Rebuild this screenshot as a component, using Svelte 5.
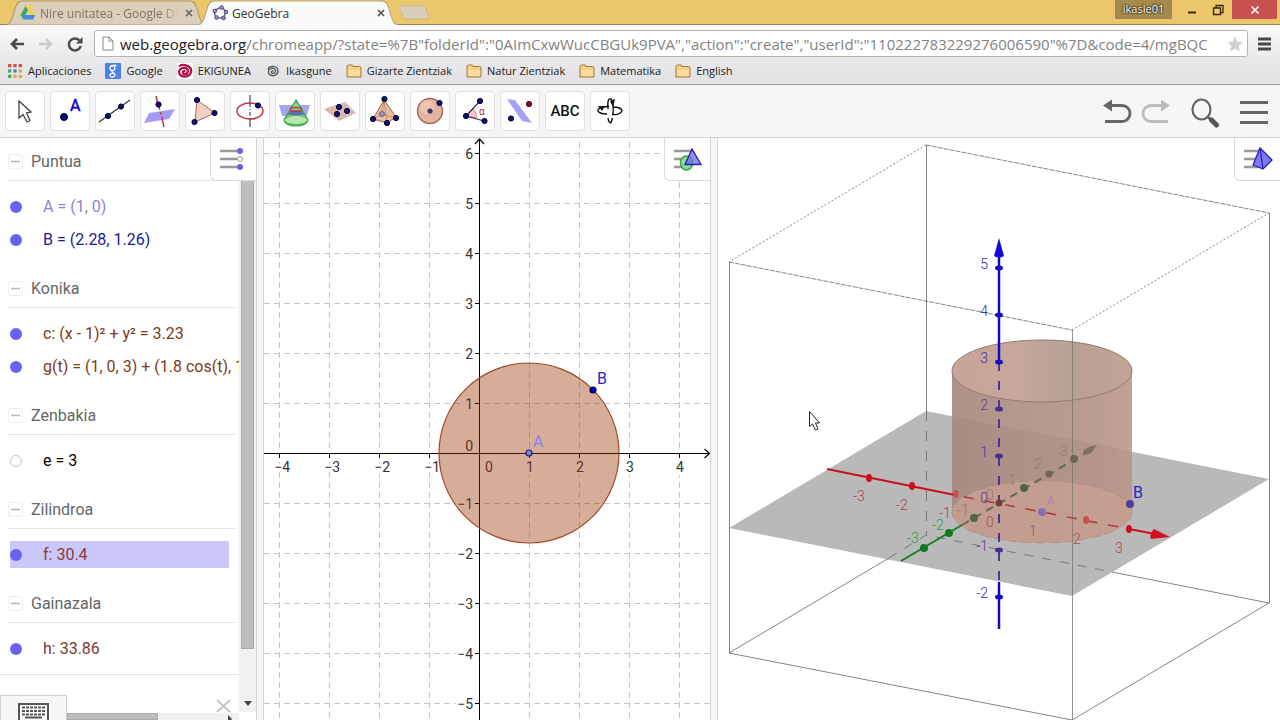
<script>
  const bookmarks = [
    { label: 'Aplicaciones', icon: 'apps' },
    { label: 'Google', icon: 'google' },
    { label: 'EKIGUNEA', icon: 'spiralRed' },
    { label: 'Ikasgune', icon: 'spiralGrey' },
    { label: 'Gizarte Zientziak', icon: 'folder' },
    { label: 'Natur Zientziak', icon: 'folder' },
    { label: 'Matematika', icon: 'folder' },
    { label: 'English', icon: 'folder' }
  ];

  const appColors = [
    ['#cf4b46', '#cf4b46', '#cf4b46'],
    ['#3fa35b', '#4579d0', '#e4a92f'],
    ['#3fa35b', '#e4a92f', '#e4a92f']
  ];

  const tools = [
    'Move', 'Point', 'Line', 'Perpendicular line', 'Polygon', 'Circle with axis', 'Intersect surfaces',
    'Plane', 'Pyramid', 'Sphere', 'Angle', 'Reflect', 'Text', 'Rotate view'
  ];

  const groups = [
    { name: 'Puntua', items: [
      { text: 'A = (1, 0)', color: '#8d7fd6', on: true },
      { text: 'B = (2.28, 1.26)', color: '#1a1a9c', on: true }
    ] },
    { name: 'Konika', items: [
      { text: 'c: (x - 1)² + y² = 3.23', color: '#7d3a1c', on: true },
      { text: 'g(t) = (1, 0, 3) + (1.8 cos(t), 1.8 sin(t), 0)', color: '#7d3a1c', on: true }
    ] },
    { name: 'Zenbakia', items: [{ text: 'e = 3', color: '#000', on: false }] },
    { name: 'Zilindroa', items: [{ text: 'f: 30.4', color: '#8a3a3a', on: true, selected: true }] },
    { name: 'Gainazala', items: [{ text: 'h: 33.86', color: '#7d3a2c', on: true }] }
  ];

  // 2D view: origin and unit length in drawing coordinates
  const ox = 479;
  const oy = 453;
  const unit = 50;
  const xs = [-4, -3, -2, -1, 1, 2, 3, 4];
  const ys = [6, 5, 4, 3, 2, 1, -1, -2, -3, -4, -5];
  const fmt = (n) => (n < 0 ? '−' + -n : '' + n);

  // 3D view: tick marks along the vertical axis
  const zTicks = [5, 4, 3, 2, 1, -1, -2].map((n) => ({ n, y: 503 - n * 47 }));
</script>

<div class="window">
  <header class="strip">
    <div class="tab first">
      <svg class="shape" viewBox="0 0 200 24" preserveAspectRatio="none" aria-hidden="true">
        <path d="M0 24C5 23 6 18 8 12C10 5 11 1 16 1H184C189 1 190 5 192 12C194 18 195 23 200 24Z" fill="#dccfb9" stroke="#ab9873" />
      </svg>
      <svg class="fav" viewBox="0 0 16 16" aria-hidden="true">
        <path d="M5.500 1h5l5 9h-5z" fill="#f5cf45" /><path d="M5.500 1L8 5.500 3 14.500 .5 10z" fill="#3ba56b" /><path d="M5.500 10h10L13 14.500H3z" fill="#4688e8" />
      </svg>
      <span class="title fade">Nire unitatea - Google Drive</span>
      <button class="close" aria-label="Close tab"><svg viewBox="0 0 8 8"><path d="M1 1l6 6M7 1L1 7" stroke="#666" stroke-width="1.700" /></svg></button>
    </div>
    <div class="tab active">
      <svg class="shape" viewBox="0 0 200 24" preserveAspectRatio="none" aria-hidden="true">
        <path d="M0 24C5 23 6 18 8 12C10 5 11 1 16 1H184C189 1 190 5 192 12C194 18 195 23 200 24" fill="#fafafa" stroke="#b7a47c" />
      </svg>
      <svg class="fav" viewBox="0 0 16 16" aria-hidden="true">
        <ellipse cx="8" cy="8" rx="5.500" ry="5" transform="rotate(-20 8 8)" fill="none" stroke="#5d5787" stroke-width="1.400" />
        <g fill="#9d98cc" stroke="#4a4470" stroke-width="1"><circle cx="2.800" cy="6" r="1.800" /><circle cx="9.500" cy="2.500" r="1.800" /><circle cx="14" cy="7" r="1.800" /><circle cx="11.500" cy="13" r="1.800" /><circle cx="4.500" cy="12.500" r="1.800" /></g>
      </svg>
      <span class="title">GeoGebra</span>
      <button class="close" aria-label="Close tab"><svg viewBox="0 0 8 8"><path d="M1 1l6 6M7 1L1 7" stroke="#555" stroke-width="1.700" /></svg></button>
    </div>
    <button class="newtab" aria-label="New tab"><svg viewBox="0 0 32 15"><path d="M1 2Q1 1 3 1H24Q27 1 28 4L31 12Q31 14 29 14H8Q6 14 5 12Z" fill="#d8cdb8" stroke="#c8b68c" /></svg></button>
    <span class="spacer"></span>
    <span class="user">ikasle01</span>
    <div class="controls">
      <button class="ctl" aria-label="Minimize"><svg viewBox="0 0 12 12"><path d="M2 8.500h8" stroke="#33260c" stroke-width="2" /></svg></button>
      <button class="ctl" aria-label="Restore"><svg viewBox="0 0 12 12"><path d="M1.500 4h7v6.500h-7zM4 3.500V1.500h7v7H9" fill="none" stroke="#33260c" stroke-width="1.300" /></svg></button>
      <button class="ctl quit" aria-label="Close"><svg viewBox="0 0 12 12"><path d="M2.500 2.500l7 7M9.500 2.500l-7 7" stroke="#fff" stroke-width="1.600" /></svg></button>
    </div>
  </header>

  <nav class="address">
    <button class="nav" aria-label="Back"><svg viewBox="0 0 16 16"><path d="M15 8H3M8 3L3 8l5 5" fill="none" stroke="#4a4a4a" stroke-width="2.600" /></svg></button>
    <button class="nav" aria-label="Forward"><svg viewBox="0 0 16 16"><path d="M1 8h12M8 3l5 5-5 5" fill="none" stroke="#c9c9c9" stroke-width="2.400" /></svg></button>
    <button class="nav" aria-label="Reload"><svg viewBox="0 0 16 16"><path d="M12.500 4.500A6 6 0 1 0 13.800 10" fill="none" stroke="#4a4a4a" stroke-width="2.500" /><path d="M15.500 1v6.500H9z" fill="#4a4a4a" /></svg></button>
    <div class="omnibox">
      <svg class="doc" viewBox="0 0 12 15" aria-hidden="true"><path d="M1 1h6l4 4v9H1zM7 1v4h4" fill="#fdfdfd" stroke="#8a8a8a" /></svg>
      <a class="url" href="#top"><span class="host">web.geogebra.org</span>/chromeapp/?state=%7B"folderId":"0AImCxwWucCBGUk9PVA","action":"create","userId":"110222783229276006590"%7D&amp;code=4/mgBQC</a>
      <button class="star" aria-label="Bookmark"><svg viewBox="0 0 16 16"><path d="M8 .5l2.200 5.200 5.600.5-4.200 3.700 1.300 5.500L8 12.500l-4.900 2.900 1.300-5.500L.2 6.200l5.600-.5z" fill="#cfcfd2" /></svg></button>
    </div>
    <button class="nav menu" aria-label="Menu"><svg viewBox="0 0 14 14"><path d="M0 2h13M0 7h13M0 12h13" stroke="#4c4650" stroke-width="3" /></svg></button>
  </nav>

  <nav class="bookmarks">
    {#each bookmarks as b}
      <a href="#top">
        {#if b.icon === 'apps'}
          <svg viewBox="0 0 15 15" aria-hidden="true">
            {#each appColors as row, r}
              {#each row as color, c}
                <rect x={1 + c * 5} y={1 + r * 5} width="3" height="3" fill={color} />
              {/each}
            {/each}
          </svg>
        {:else if b.icon === 'google'}
          <svg viewBox="0 0 16 16" aria-hidden="true"><rect width="16" height="16" rx="1" fill="#4a83ea" /><path d="M11.500 2.500H8.500C5.500 2.500 5 4 5 5C5 6.500 6 7.500 7.500 7.500C9 7.500 9.800 6.500 9.800 5C9.800 3.500 9 2.500 8 2.500M7.500 7.500C6.500 8.500 7 9 8.500 9.800C10.500 10.800 10.500 14 7.500 14C4 14 4 10.300 8 10.300" fill="none" stroke="#fff" stroke-width="1.300" /></svg>
        {:else if b.icon === 'spiralRed'}
          <svg viewBox="0 0 16 16" aria-hidden="true"><rect width="16" height="16" fill="#fff" /><path d="M2 3.500C5 .5 14 2 14.200 8C14 13.500 6 15.500 2.800 11.500C.5 7.500 4 4.300 8.500 5C12 6 11.500 11 8 11.200C5 11 5 7.500 8.500 8" fill="none" stroke="#b01545" stroke-width="2.300" /></svg>
        {:else if b.icon === 'spiralGrey'}
          <svg class="small" viewBox="0 0 12 12" aria-hidden="true"><path d="M1 4.500C2 0 10 .5 11 5.500C11.500 10 5 12.500 2 9C0 5 4 2.500 7 3.500C9.500 5 8.500 8.500 6 8.500C3.800 8.300 4 5.500 6.500 6" fill="none" stroke="#555" stroke-width="1.300" /></svg>
        {:else}
          <svg viewBox="0 0 16 16" aria-hidden="true"><path d="M1 14V3.500Q1 2 2.500 2H6q1 0 1 1.500h6.500Q15 3.500 15 5v9z" fill="#f6cf83" stroke="#a07a3c" /><path d="M2 7h12v6H2z" fill="#fbdc9a" /></svg>
        {/if}
        <span>{b.label}</span>
      </a>
    {/each}
  </nav>

  <div class="toolbar">
    {#each tools as t, i}
      <button class="tool" aria-label={t}>
        {#if i === 12}
          <span class="abc">ABC</span>
        {:else}
          <svg viewBox="0 0 38 38">
            {#if i === 0}
              <path d="M13 9v17l4-3.500 4 7.500 3-1.500-3.500-7.500 4.500-1z" fill="#fff" stroke="#444" stroke-width="1.300" />
            {:else if i === 1}
              <circle cx="13" cy="25" r="3.500" fill="#00008c" stroke="#000" /><text x="19" y="19" font-size="16" fill="#1000c8" stroke="#1000c8" stroke-width=".5">A</text>
            {:else if i === 2}
              <path d="M3 30L34 8" stroke="#333" stroke-width="1.200" /><circle cx="12" cy="24" r="2.600" class="dot" /><circle cx="25" cy="14.500" r="2.600" class="dot" />
            {:else if i === 3}
              <path d="M3 31l5-10 26-4-6 10z" fill="#a39cf2" /><path d="M15 4l3 12M21 26l2 9" stroke="#cc3344" stroke-width="1.500" /><path d="M18 15l3 11" stroke="#c04060" stroke-width="1.500" stroke-dasharray="3 2" /><circle cx="17.500" cy="12.500" r="2.600" class="dot" />
            {:else if i === 4}
              <path d="M11 8l18 13-20 9z" fill="#f2cfc3" stroke="#b0664c" /><circle cx="11" cy="8" r="2.600" class="dot" /><circle cx="28.500" cy="21" r="2.600" class="dot" /><circle cx="8.500" cy="30" r="2.600" class="dot" />
            {:else if i === 5}
              <ellipse cx="19" cy="19" rx="13" ry="8" fill="none" stroke="#c8334a" stroke-width="1.500" /><path d="M19 3v8M19 26v9" stroke="#555" stroke-width="1.300" /><path d="M19 11v15" stroke="#555" stroke-width="1.300" stroke-dasharray="4 2 1 2" /><circle cx="27" cy="13.500" r="2.600" class="dot" />
            {:else if i === 6}
              <path d="M3 13l31 0-3 10L6 24z" fill="#a9a4ee" /><path d="M20 8L8 28C9 36 31 36 32 28Z" fill="#8ed28a" stroke="#2e9a48" stroke-width="1.200" /><path d="M15 18l-3 5h16l-3-5z" fill="#5870bb" /><ellipse cx="20" cy="28" rx="11.500" ry="4.500" fill="#b5e6ab" stroke="#4bb353" /><ellipse cx="20" cy="17.500" rx="5.500" ry="2" fill="none" stroke="#c33" stroke-width="1.300" />
            {:else if i === 7}
              <path d="M3 17l21-7 11 11-17 8z" fill="#d8b9ab" /><circle cx="18" cy="15" r="2.600" class="dot" /><circle cx="26" cy="19" r="2.600" class="dot" /><circle cx="16" cy="22" r="2.600" class="dot" />
            {:else if i === 8}
              <path d="M18 8L7 27l14 4 9-6z" fill="#e9bda6" stroke="#a05a38" /><path d="M18 8l3 23M18 8l-2 13M7 27l9-5 14 4" stroke="#b87a5c" fill="none" stroke-width=".7" /><circle cx="16" cy="22" r="2.500" fill="#9a93b8" stroke="#667" /><circle cx="18.500" cy="7" r="2.600" class="dot" /><circle cx="7" cy="27" r="2.600" class="dot" /><circle cx="21" cy="31" r="2.600" class="dot" /><circle cx="30" cy="26" r="2.600" class="dot" />
            {:else if i === 9}
              <circle cx="19" cy="19" r="12.500" fill="#e3b5a0" stroke="#a4684e" stroke-width="1.400" /><circle cx="16" cy="15" r="7" fill="#ebc4b2" /><circle cx="19" cy="19" r="2.600" fill="#3c3472" /><circle cx="28.500" cy="11" r="2.600" class="dot" />
            {:else if i === 10}
              <path d="M10 24l7-7c3 2 4 6 3 9z" fill="#f9c6cc" stroke="#d87a86" /><path d="M24 9L10 24l18 5" fill="none" stroke="#333" stroke-width="1.200" /><circle cx="24" cy="9" r="2.600" class="dot" /><circle cx="10" cy="24" r="2.600" class="dot" /><circle cx="28.500" cy="29" r="2.600" class="dot" /><text x="23" y="23" font-size="10" fill="#b8283c">α</text>
            {:else if i === 11}
              <path d="M6 7l8 1 17 23-10-2z" fill="#a8a0f4" /><circle cx="28" cy="12" r="2.600" fill="#8c1030" stroke="#400" /><circle cx="10" cy="26.500" r="2.600" class="dot" />
            {:else}
              <path d="M16 22C10 22 6 20 7 18C8 15.500 13 14.500 18 14.500M22 15c6 0 9 2 9 4C30 22 25 23 21 22.500M17 17C16.500 10 17 6 20 7C22 9 22.500 16 22 22M17 26C17.500 30 19 31.500 20 30.500L21.500 26" fill="none" stroke="#111" stroke-width="1.400" /><path d="M7 14l7 0-3 5zM24 7l-2 8-3-6z" fill="#111" />
            {/if}
          </svg>
        {/if}
      </button>
    {/each}
    <span class="spacer"></span>
    <button class="act" aria-label="Undo"><svg viewBox="0 0 30 30"><path d="M8 7.500h12a8 8 0 0 1 0 16H3" fill="none" stroke="#666" stroke-width="2.800" /><path d="M1 7.500l9-6v12z" fill="#666" /></svg></button>
    <button class="act" aria-label="Redo"><svg viewBox="0 0 30 30"><path d="M22 7.500H10a8 8 0 0 0 0 16H27" fill="none" stroke="#bdbdbd" stroke-width="2.800" /><path d="M29 7.500l-9-6v12z" fill="#bdbdbd" /></svg></button>
    <button class="act find" aria-label="Search"><svg viewBox="0 0 30 30"><ellipse cx="11.500" cy="11.500" rx="9" ry="10" fill="none" stroke="#666" stroke-width="2.200" /><path d="M18 19l3 3" stroke="#666" stroke-width="2.500" /><path d="M21.500 22l5 5" stroke="#555" stroke-width="5" stroke-linecap="round" /></svg></button>
    <button class="act" aria-label="Options"><svg viewBox="0 0 30 30"><path d="M1 4.500h28M1 14.500h28M1 24.500h28" stroke="#666" stroke-width="3" /></svg></button>
  </div>

  <main>
    <section class="algebra" aria-label="Algebra">
      <div class="list">
        {#each groups as g}
          <div class="group">
            <h2><button class="fold" aria-label="Collapse"><svg viewBox="0 0 9 3"><path d="M0 1.500h9" stroke="#b4b4b4" stroke-width="1.500" /></svg></button>{g.name}</h2>
            <ul>
              {#each g.items as it}
                <li class:selected={it.selected}><span class="mark" class:off={!it.on}></span><span class="expr" style="color: {it.color}">{it.text}</span></li>
              {/each}
            </ul>
          </div>
        {/each}
      </div>
      <div class="vbar"><div class="thumb"></div><svg viewBox="0 0 8 5" aria-hidden="true"><path d="M0 0h8L4 5z" fill="#444" /></svg></div>
      <div class="foot">
        <button class="keys" aria-label="Keyboard">
          <svg viewBox="0 0 31 18"><rect x="1" y="2" width="29" height="18" fill="#fff" stroke="#555" stroke-width="2" /><path d="M4 5.500h24M4 9h24M4 12.500h24" stroke="#555" stroke-width="2" stroke-dasharray="3 1" /><path d="M7 15.500h17" stroke="#555" stroke-width="2" /></svg>
        </button>
        <div class="hbar"><div class="hthumb"></div></div>
        <svg class="hide" viewBox="0 0 16 22" aria-hidden="true"><path d="M1 2l13 12M14 2L1 14" stroke="#c4c4c4" stroke-width="1.800" /><path d="M12 17v8l4-4z" fill="#444" /></svg>
      </div>
      <button class="style" aria-label="Algebra style">
        <svg viewBox="0 0 34 28"><path d="M3 6h17M3 14h17M3 22h17" stroke="#999" stroke-width="2.500" /><circle cx="23" cy="6" r="3" fill="#6b5df0" /><circle cx="23" cy="14" r="2.500" fill="#fff" stroke="#999" /><circle cx="23" cy="22" r="3" fill="#6b5df0" /></svg>
      </button>
    </section>
    <div class="split"></div>

    <section class="plot" aria-label="Graphics">
      <svg class="scene" viewBox="264 138 446 582" preserveAspectRatio="xMidYMin slice">
        <g stroke="#c6c6c6" stroke-dasharray="6 4" shape-rendering="crispEdges">
          {#each xs as x}<path d="M{ox + x * unit + .5} 142V720" />{/each}
          {#each ys as y}<path d="M264 {oy - y * unit + .5}H710" />{/each}
        </g>
        <g class="halo">
          {#each xs as x}<text x={ox + x * unit + (x < 0 ? 11 : 1)} y="472" text-anchor={x < 0 ? 'end' : 'middle'}>{fmt(x)}</text>{/each}
          {#each ys as y}<text x="473" y={oy - y * unit + 6} text-anchor="end">{fmt(y)}</text>{/each}
          <text x="473" y="451" text-anchor="end">0</text><text x="485" y="472">0</text>
        </g>
        <g stroke="#000" shape-rendering="crispEdges">
          <path d="M264 453.500H709M479.500 140V720" />
          {#each xs as x}<path d="M{ox + x * unit + .5} 454v4" />{/each}
          {#each ys as y}<path d="M475 {oy - y * unit + .5}h5" />{/each}
        </g>
        <path d="M704.500 449l5 4.500-5 4.500M475 144l4.500-5 4.500 5" fill="none" stroke="#111" stroke-width="1.300" />
        <circle cx="529" cy="453" r="90" fill="#993300" fill-opacity=".4" stroke="#a04a2a" stroke-width="1.200" />
        <circle cx="529" cy="453" r="3" fill="#8080f0" stroke="#222266" stroke-width="1.200" />
        <circle cx="593" cy="390" r="3" fill="#0000cc" stroke="#000033" stroke-width="1.200" />
        <text x="533" y="447" class="name" fill="#8a80f0">A</text>
        <text x="597" y="384" class="name" fill="#2a1ed0">B</text>
      </svg>
      <button class="style" aria-label="Graphics style">
        <svg viewBox="0 0 34 28"><path d="M3 6h19M3 14h16M3 22h12" stroke="#999" stroke-width="2.500" /><ellipse cx="15.500" cy="18" rx="6" ry="7" fill="#8edb93" stroke="#2aa53f" stroke-width="1.400" /><path d="M21 4L14 19.500h16z" fill="#6d68e6" fill-opacity=".75" stroke="#2a20c0" stroke-width="1.400" /></svg>
      </button>
    </section>
    <div class="split"></div>

    <section class="space" aria-label="3D Graphics">
      <svg class="scene thin" viewBox="718 138 562 582" preserveAspectRatio="xMidYMin slice">
        <defs>
          <linearGradient id="wall"><stop offset="0" stop-color="#ae9289" /><stop offset=".35" stop-color="#b4988d" /><stop offset=".8" stop-color="#bb9c91" /><stop offset="1" stop-color="#c3a197" /></linearGradient>
          <linearGradient id="inner"><stop offset="0" stop-color="#c8a499" /><stop offset=".35" stop-color="#c7a79b" /><stop offset=".65" stop-color="#b8a095" /><stop offset="1" stop-color="#c4a398" /></linearGradient>
          <clipPath id="body"><path d="M952 371V512A90 31 0 0 0 1132 512V371A90 31 0 0 1 952 371Z" /></clipPath>
        </defs>
        <path d="M729 528L926 411 1269 479 1072 596z" fill="#b9b9b9" />
        <g fill="none" stroke="#666" stroke-width=".8">
          <path d="M926.500 145V411M729.500 262V653M1269.500 213V603" />
          <path d="M926 145L1269 213M729 262L1072 330" stroke-dasharray="5 1" />
          <path d="M926 145L729 262M1072 330L1269 213" stroke-dasharray="2 2" />
          <path d="M926.500 411V535" stroke-dasharray="10 10" />
          <path d="M729 653L889 558M1112 572L1269 603M729 653L1072 720L1269 603" />
          <path d="M889 558L926 535L1112 572" stroke-dasharray="9 9" />
        </g>
        <path d="M952 371V512A90 31 0 0 0 1132 512V371A90 31 0 0 1 952 371Z" fill="url(#wall)" />
        <path clip-path="url(#body)" d="M940 414L1150 455V560H940z" fill="#80645c" fill-opacity=".12" />
        <ellipse cx="1042" cy="512" rx="90" ry="31" fill="#c8a092" fill-opacity=".8" stroke="#b08a7d" stroke-width=".8" stroke-dasharray="8 6" />
        <ellipse cx="1042" cy="371" rx="90" ry="31" fill="url(#inner)" stroke="#94786e" />
        <path d="M1072.500 330V720" stroke="#7c7370" stroke-width=".8" />

        <g fill="none" stroke-width="2">
          <path d="M827 469L955 495" stroke="#c8101c" /><path d="M955 495L1129 529" stroke="#b3343c" stroke-width="1.500" stroke-dasharray="10 11" stroke-dashoffset="-9" /><path d="M1129 529L1155 534" stroke="#c8101c" />
          <path d="M901 561L962 525" stroke="#138020" /><path d="M962 525L1089 451" stroke="#5f6b52" stroke-dasharray="8 6" />
          <path d="M999 255V362" stroke="#1208c8" stroke-width="2.500" /><path d="M999 362V582" stroke="#54329c" stroke-dasharray="9 10" /><path d="M999 582V629" stroke="#1c08b0" stroke-width="2.500" />
        </g>
        <path d="M999 238L1004 256Q999 259 994 256z" fill="#1208d8" />
        <path d="M1170 537L1151 539Q1149 534 1154 529z" fill="#d8101c" />
        <path d="M1097 445L1091 453Q1084 457 1083 451Q1086 447 1097 445z" fill="#7d7060" />
        <g fill="#c8101c"><ellipse cx="869" cy="478" rx="3" ry="4" /><ellipse cx="912" cy="486" rx="3" ry="4" /><ellipse cx="1129" cy="529" rx="3" ry="4" /></g>
        <g fill="#c9524c"><ellipse cx="956" cy="494" rx="2.500" ry="4" /><ellipse cx="1086" cy="520" rx="3" ry="4" /></g>
        <g fill="#107a1c"><circle cx="924" cy="548" r="4" /><circle cx="949" cy="533" r="4" /></g>
        <g fill="#4f6548"><circle cx="974" cy="518" r="4" /><circle cx="1024" cy="488" r="4" /></g>
        <g fill="#6d6657"><circle cx="1049" cy="474" r="3.500" /><circle cx="1074" cy="459" r="4" /></g>
        <circle cx="999" cy="503" r="3.500" fill="#74403c" />
        {#each zTicks as t}
          <ellipse cx="999" cy={t.y} rx="4" ry="2.500" fill={t.n > 2 || t.n < -1 ? '#1a0cc0' : '#4a2c98'} />
          <text x="988" y={t.y + 1} text-anchor="end" fill={t.n > 2 || t.n < -1 ? '#3126b4' : '#5a35a2'}>{t.n}</text>
        {/each}
        <text x="988" y="503" text-anchor="end" fill="#5a35a2">0</text>
        <circle cx="1042" cy="512" r="4" fill="#8a6cb4" />
        <circle cx="1130" cy="504" r="4" fill="#4b409c" />
        <g fill="#ae3b4e"><text x="853" y="501">-3</text><text x="896" y="510">-2</text><text x="939" y="518">-1</text><text x="1115" y="553">3</text></g>
        <g fill="#a0584f"><text x="1029" y="536">1</text><text x="1073" y="544">2</text><text x="986" y="527">0</text></g>
        <g fill="#2a9a35"><text x="907" y="543">-3</text><text x="932" y="530">-2</text></g>
        <g fill="#94796b"><text x="957" y="515">-1</text><text x="986" y="500">0</text><text x="1008" y="485">1</text><text x="1034" y="469">2</text><text x="1060" y="456">3</text></g>
        <text x="1047" y="505" font-size="12" fill="#9678bc">A</text>
        <text x="1133" y="498" class="name" fill="#2a1ed0">B</text>
        <path d="M809.500 411.500v15l3-2.500 3 6 2.500-1-2.500-6h4z" fill="#fff" stroke="#222" />
      </svg>
      <button class="style" aria-label="3D style">
        <svg viewBox="0 0 34 28"><path d="M3 6h16M3 14h14M3 22h14" stroke="#999" stroke-width="2.500" /><path d="M19 3L12 20l10 4 9-9z" fill="#7d78ee" stroke="#2a20c0" stroke-width="1.300" /><path d="M19 3l3 21" stroke="#2a20c0" stroke-width="1.300" /></svg>
      </button>
    </section>
  </main>
</div>

<style>
  :global(body) { margin: 0; }
  .window { display: flex; flex-direction: column; height: 100vh; overflow: hidden; background: #fff; font-family: Roboto, sans-serif; }
  button { border: 0; padding: 0; background: none; font: inherit; color: inherit; display: flex; align-items: center; justify-content: center; flex: none; }
  svg { display: block; flex: none; }
  .spacer { flex: 1; }

  .strip { display: flex; flex: none; height: 24px; padding: 0 3px 0 6px; background: #ecc66b; border-bottom: 1px solid #94845a; font-family: "Open Sans", sans-serif; font-size: 12px; }
  .tab { position: relative; display: flex; align-items: center; width: 200px; height: 25px; padding: 1px 11px 0 14px; box-sizing: border-box; gap: 4px; margin-right: -8px; color: #7a746b; }
  .tab.active { color: #333; z-index: 1; margin-right: 0; }
  .tab > * { position: relative; }
  .tab .shape { position: absolute; inset: 0; width: 100%; height: 100%; }
  .fav { width: 16px; height: 16px; }
  .title { flex: 1; min-width: 0; white-space: nowrap; overflow: hidden; }
  .fade { -webkit-mask-image: linear-gradient(90deg, #000 88%, transparent); mask-image: linear-gradient(90deg, #000 88%, transparent); }
  .close { width: 12px; height: 16px; }
  .close svg { width: 8px; height: 8px; }
  .newtab { align-self: center; }
  .newtab svg { width: 32px; height: 15px; }
  .user { align-self: flex-start; width: 57px; height: 19px; line-height: 18px; text-align: center; font-size: 11px; color: #fff; background: #a48a4c; text-shadow: 0 0 2px #000, 0 0 2px #000; }
  .controls { display: flex; align-self: flex-start; height: 19px; padding-left: 7px; }
  .ctl { width: 26px; height: 19px; }
  .ctl svg { width: 12px; height: 12px; }
  .ctl.quit { width: 45px; margin-left: 1px; background: #c75050; }

  .address { display: flex; flex: none; align-items: center; height: 33px; padding: 2px 7px 0 9px; background: linear-gradient(#fafafa, #e9e8ea); }
  .nav { width: 16px; height: 28px; margin-right: 13px; }
  .nav svg { width: 16px; height: 16px; }
  .nav.menu { margin: 0 0 0 9px; }
  .nav.menu svg { width: 14px; height: 14px; }
  .omnibox { display: flex; flex: 1; min-width: 0; align-items: center; height: 27px; box-sizing: border-box; margin-left: -2px; padding: 0 4px 0 7px; border: 1px solid #b5b3b6; border-radius: 3px; background: #fff; }
  .doc { width: 12px; height: 15px; }
  .url { flex: 1; min-width: 0; margin-left: 6px; overflow: hidden; white-space: nowrap; font: 15px/24px "Open Sans", sans-serif; color: #828282; text-decoration: none; }
  .host { color: #222; }
  .star { width: 16px; height: 24px; margin-left: 4px; }
  .star svg { width: 16px; height: 16px; }

  .bookmarks { display: flex; flex: none; align-items: center; gap: 14px; height: 21px; padding: 0 7px 3px; border-bottom: 1px solid #9c9a9d; background: linear-gradient(#e9e8ea, #e1e0e2); font: 11px/16px "Open Sans", sans-serif; }
  .bookmarks a { display: flex; align-items: center; gap: 5px; color: #222; text-decoration: none; white-space: nowrap; }
  .bookmarks svg { width: 16px; height: 16px; }
  .bookmarks .small { width: 12px; height: 12px; margin: 0 2px; }

  .toolbar { display: flex; flex: none; align-items: center; gap: 5px; height: 52px; padding: 0 11px 0 5px; background: #f6f6f6; border-bottom: 1px solid #d2d2d2; }
  .tool { width: 40px; height: 40px; box-sizing: border-box; border: 1px solid #e0e0e0; border-radius: 4px; background: #fff; }
  .tool svg { width: 38px; height: 38px; }
  .dot { fill: #10107c; stroke: #000030; }
  .abc { font: 500 15px/20px Roboto, sans-serif; color: #111; }
  .act { width: 30px; height: 34px; margin-left: 4px; align-items: flex-end; }
  .act svg { width: 30px; height: 30px; }
  .find { margin-left: 14px; margin-right: 10px; }

  main { display: flex; flex: 1; min-height: 0; }
  section { position: relative; overflow: hidden; }
  .split { flex: none; width: 6px; border: 1px solid #d4d4d4; border-width: 0 1px; background: #f5f5f5; }
  .algebra { display: grid; grid-template: minmax(0, 1fr) 25px / minmax(0, 1fr) 17px; flex: none; width: 256px; }
  .list { grid-area: 1 / 1 / 3 / 2; padding-top: 4px; overflow: hidden; }
  .group:last-child { border-bottom: 1px solid #e4e4e4; }
  .group:last-child ul { padding-bottom: 9px; }
  h2 { display: flex; align-items: center; gap: 8px; height: 38px; margin: 0 3px 0 8px; border-bottom: 1px solid #e8e8e8; font-size: 16px; font-weight: 400; color: #666; }
  .fold { width: 15px; height: 15px; box-sizing: border-box; border: 1px solid #eee; border-radius: 3px; }
  .fold svg { width: 9px; height: 3px; }
  ul { display: flex; flex-direction: column; list-style: none; margin: 0; padding: 9px 0 13px 10px; }
  li { display: flex; align-items: center; gap: 21px; height: 27px; margin: 3px 0; font-size: 16px; }
  li.selected { margin-right: 10px; background: #cac8fb; border-radius: 1px; }
  .mark { width: 12px; height: 12px; box-sizing: border-box; border-radius: 50%; background: #6c62f2; flex: none; }
  .mark.off { background: #fff; border: 1px solid #bcc8bc; }
  .expr { overflow: hidden; white-space: nowrap; }
  .vbar { grid-area: 1 / 2 / 3 / 3; display: flex; flex-direction: column; align-items: center; background: #f1f1f1; margin-bottom: 8px; padding-bottom: 6px; }
  .thumb { flex: 0 0 90%; width: 13px; box-sizing: border-box; border: 1px solid #aaa; background: #bebebe; }
  .vbar svg { width: 8px; height: 5px; margin-top: auto; }
  .foot { grid-area: 2 / 1; display: flex; align-items: flex-end; position: relative; }
  .keys { width: 67px; height: 25px; box-sizing: border-box; border: 1px solid #d0d0d0; border-bottom: 0; background: #f7f7f7; align-items: flex-end; }
  .keys svg { width: 31px; height: 18px; }
  .hbar { flex: 1; height: 7px; background: #f1f1f1; }
  .hthumb { width: 53%; height: 7px; box-sizing: border-box; background: #bebebe; border: 1px solid #aaa; }
  .hide { position: absolute; right: 7px; bottom: 0; width: 16px; height: 22px; }
  .style { position: absolute; top: 0; right: 0; width: 46px; height: 43px; box-sizing: border-box; border: 1px solid #dadada; border-width: 0 0 1px 1px; border-radius: 0 0 0 6px; background: #fff; }
  .style svg { width: 34px; height: 28px; }
  .plot { flex: 446 1 0; }
  .space { flex: 562 1 0; }
  .scene { width: 100%; height: 100%; font-family: Roboto, sans-serif; font-size: 14px; }
  .thin { font-weight: 300; }
  .halo text { fill: #333; stroke: #fff; stroke-width: 6px; paint-order: stroke; }
  .scene .name { font-size: 16px; font-weight: 400; }
</style>
